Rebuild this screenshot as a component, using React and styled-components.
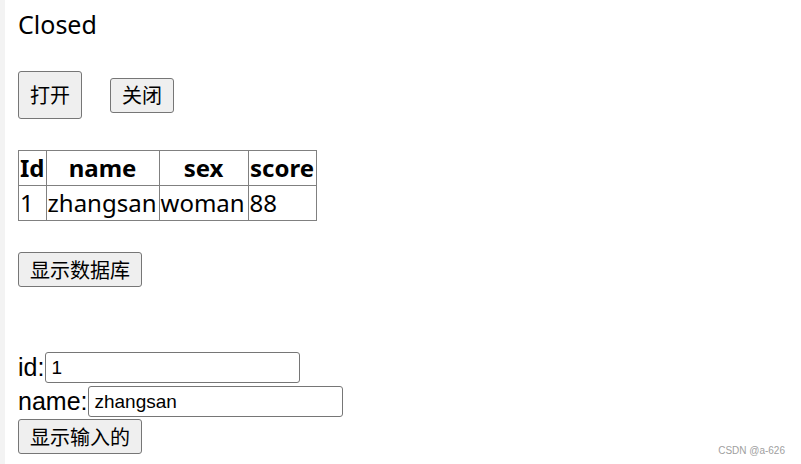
import styled, { createGlobalStyle } from 'styled-components'

const GlobalStyle = createGlobalStyle`
  html, body {
    margin: 0;
    padding: 0;
    background: #fff;
  }
  body {
    font-family: "Noto Sans", "Noto Sans CJK SC", sans-serif;
    color: #000;
  }
`

const Page = styled.div`
  position: relative;
  min-height: 464px;
  border-left: 5px solid #f3f3f3;
  padding: 6px 0 0 13px;
  box-sizing: border-box;
`

const Status = styled.div`
  font-size: 25px;
  line-height: 36px;
  margin-bottom: 29px;
`

const ButtonRow = styled.div`
  display: flex;
  align-items: center;
  gap: 28px;
  margin-bottom: 31px;
`

const Button = styled.button`
  font-family: "Noto Sans CJK SC", sans-serif;
  font-size: 20px;
  color: #000;
  background: #efefef;
  border: 1px solid #767676;
  border-radius: 3px;
  padding: 0 11px;
  width: ${(p) => p.$w || 'auto'};
  height: ${(p) => (p.$tall ? '48px' : '35px')};
  line-height: 1;
  display: flex;
  align-items: center;
  justify-content: center;
  box-sizing: border-box;
`

const Table = styled.table`
  border-collapse: collapse;
  font-size: 24px;
  margin-bottom: 31px;
  th, td {
    border: 1px solid #808080;
    padding: 0 1px;
    height: 34px;
    line-height: 32px;
    white-space: nowrap;
  }
  th {
    font-weight: 700;
  }
  td {
    text-align: left;
  }
`

const Form = styled.div`
  margin-top: 65px;
  display: flex;
  flex-direction: column;
  align-items: flex-start;
  gap: 3px;
  & > button {
    margin-top: -1px;
  }
`

const Field = styled.label`
  display: flex;
  align-items: center;
  font-family: "Liberation Sans", Arial, sans-serif;
  font-size: 25px;
  line-height: 31px;
`

const Input = styled.input`
  width: 255px;
  height: 31px;
  box-sizing: border-box;
  border: 1px solid #767676;
  border-radius: 3px;
  padding: 0 5px;
  margin: 0 0 0 1px;
  font-family: "Liberation Sans", Arial, sans-serif;
  font-size: 19px;
  color: #000;
`

const Watermark = styled.div`
  position: absolute;
  right: 16px;
  bottom: 8px;
  font-family: "Liberation Sans", Arial, sans-serif;
  font-size: 10px;
  color: #a0a0a0;
`

const rows = [{ id: 1, name: 'zhangsan', sex: 'woman', score: 88 }]

export default function App() {
  return (
    <>
      <GlobalStyle />
      <Page>
        <Status>Closed</Status>
        <ButtonRow>
          <Button $tall>打开</Button>
          <Button>关闭</Button>
        </ButtonRow>
        <Table>
          <thead>
            <tr>
              <th style={{ width: 24 }}>Id</th>
              <th style={{ width: 110 }}>name</th>
              <th style={{ width: 86 }}>sex</th>
              <th style={{ width: 65 }}>score</th>
            </tr>
          </thead>
          <tbody>
            {rows.map((r) => (
              <tr key={r.id}>
                <td>{r.id}</td>
                <td>{r.name}</td>
                <td>{r.sex}</td>
                <td>{r.score}</td>
              </tr>
            ))}
          </tbody>
        </Table>
        <Button $w="124px">显示数据库</Button>
        <Form>
          <Field>
            id:<Input defaultValue="1" />
          </Field>
          <Field>
            name:<Input defaultValue="zhangsan" />
          </Field>
          <Button $w="124px">显示输入的</Button>
        </Form>
        <Watermark>CSDN @a-626</Watermark>
      </Page>
    </>
  )
}
